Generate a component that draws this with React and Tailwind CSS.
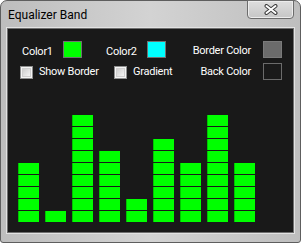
import React from "react";

const bars = [5, 1, 9, 6, 2, 7, 5, 9, 5];

function Bar({ n }) {
  return (
    <div className="flex w-[21px] flex-col gap-[1px]">
      {Array.from({ length: n }).map((_, i) => (
        <div key={i} className="h-[11px] w-[21px] border-l border-[#00c400] bg-[#00ff00]" />
      ))}
    </div>
  );
}

function CheckBox() {
  return (
    <div className="mt-[3px] flex h-[13px] w-[13px] items-center justify-center border border-[#8e8f8f] bg-[#f4f4f4]">
      <div className="h-[9px] w-[9px] border border-[#cfcfcf] bg-gradient-to-br from-[#cfcfcf] to-[#f4f4f4]" />
    </div>
  );
}

export default function App() {
  return (
    <div
      className="flex h-[243px] w-[301px] flex-col rounded-t-[7px] rounded-b-[3px] border border-[#5e5e5e] bg-gradient-to-r from-[#bdbdbd] via-[#d3d3d3] to-[#bebebe]"
      style={{ fontFamily: "Roboto, 'Liberation Sans', sans-serif" }}
    >
      <div className="flex h-[27px] items-start justify-between pl-[7px] pr-[6px]">
        <span className="pt-[6px] text-[12px] leading-[16px] text-black">Equalizer Band</span>
        <div className="-mt-px flex h-[19px] w-[47px] items-center justify-center rounded-b-[4px] border border-[#6c6c6c] bg-gradient-to-b from-[#dedede] to-[#c6c6c6] shadow-[inset_0_0_0_1px_#ececec]">
          <svg width="14" height="11" viewBox="0 0 14 11">
            <path d="M2.5 2 L11.5 9 M11.5 2 L2.5 9" stroke="#3c3c3c" strokeWidth="4" strokeLinecap="round" />
            <path d="M2.5 2 L11.5 9 M11.5 2 L2.5 9" stroke="#ffffff" strokeWidth="2" strokeLinecap="round" />
          </svg>
        </div>
      </div>
      <div className="mx-[6px] flex h-[205px] flex-col border border-[#6f6f6f] bg-[#191919] text-[11px] leading-[17px] tracking-[-0.25px] text-white shadow-[0_0_0_1px_#e2e2e2]">
        <div className="mt-[12px] flex h-[17px] items-start pl-[14px] pr-[11px]">
          <span className="w-[41px] pt-[2px]">Color1</span>
          <div className="h-[17px] w-[19px] border border-[#707070] bg-[#00ff00]" />
          <span className="ml-[24px] w-[41px] pt-[2px]">Color2</span>
          <div className="h-[17px] w-[19px] border border-[#707070] bg-[#00ffff]" />
          <span className="flex-1 pr-[12px] pt-[1px] text-right">Border Color</span>
          <div className="h-[17px] w-[19px] border border-[#7a7a7a] bg-[#6b6b6b]" />
        </div>
        <div className="mt-[5px] flex h-[17px] items-start pl-[12px] pr-[11px]">
          <CheckBox />
          <span className="ml-[6px] w-[75px]">Show Border</span>
          <CheckBox />
          <span className="ml-[6px]">Gradient</span>
          <span className="flex-1 pr-[12px] text-right">Back Color</span>
          <div className="h-[17px] w-[19px] border border-[#6b6b6b] bg-[#1a1a1a]" />
        </div>
        <div className="mt-auto flex items-end gap-[6px] pb-[10px] pl-[10px]">
          {bars.map((n, i) => (
            <Bar key={i} n={n} />
          ))}
        </div>
      </div>
    </div>
  );
}
